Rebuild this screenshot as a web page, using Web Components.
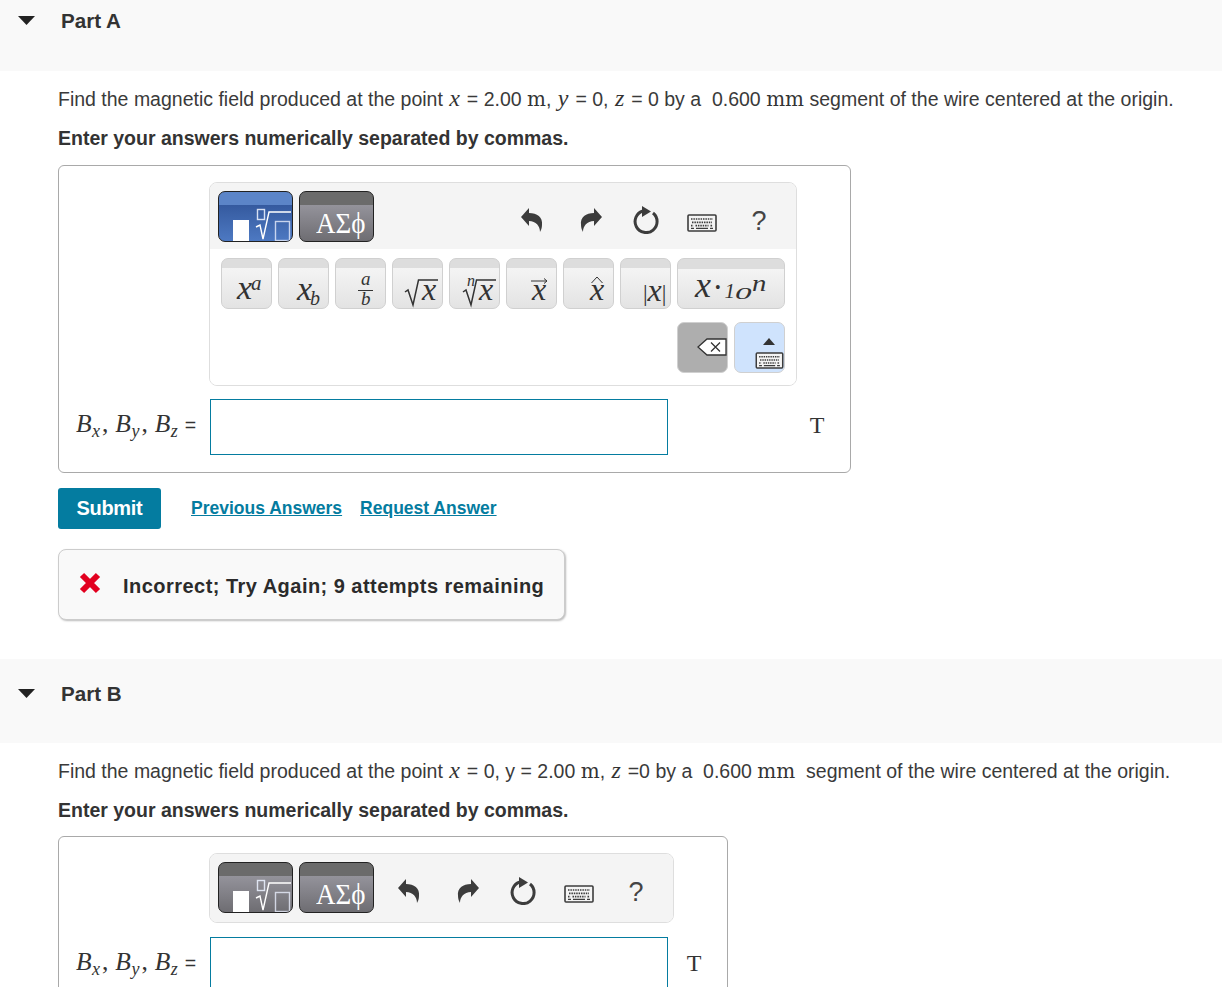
<!DOCTYPE html>
<html lang="en"><head><meta charset="utf-8"><title>Part A and Part B</title>
<style>
html,body{margin:0;padding:0;height:987px;overflow:hidden;background:#fff;font-family:"Liberation Sans",Arial,sans-serif;color:#333}
</style></head><body>
<x-part label="Part A" first>
  <x-prompt bold="Enter your answers numerically separated by commas.">Find the magnetic field produced at the point <x-m v>x</x-m> = 2.00 <x-m>m</x-m>, <x-m v>y</x-m> = 0, <x-m v>z</x-m> = 0 by a&nbsp; 0.600 <x-m>mm</x-m> segment of the wire centered at the origin.</x-prompt>
  <x-answer>
    <x-toolbar slot="toolbar" active spacer palette></x-toolbar>
  </x-answer>
  <x-actions></x-actions>
  <x-feedback>Incorrect; Try Again; 9 attempts remaining</x-feedback>
</x-part>
<x-part label="Part B">
  <x-prompt bold="Enter your answers numerically separated by commas.">Find the magnetic field produced at the point <x-m v>x</x-m> = 0, y = 2.00 <x-m>m</x-m>, <x-m v>z</x-m> =0 by a&nbsp; 0.600 <x-m>mm</x-m>&nbsp; segment of the wire centered at the origin.</x-prompt>
  <x-answer compact>
    <x-toolbar slot="toolbar"></x-toolbar>
  </x-answer>
</x-part>
<script>
const def=(n,css,html,init)=>customElements.define(n,class extends HTMLElement{
  constructor(){super();this.attachShadow({mode:'open'})}
  connectedCallback(){this.shadowRoot.innerHTML='<style>'+css+'</style>'+(typeof html==='function'?html(this):html);if(init)init(this)}
});
def('x-m',`:host{font-family:"DejaVu Serif",serif;font-size:20px;line-height:1;color:#333}
:host([v]){font-family:"Liberation Serif",serif;font-style:italic;font-size:24px;margin:0 1.500px 0 1px}`,'<slot></slot>');
def('x-part',`:host{display:block}
header{background:#f9f9f9;height:84px;box-sizing:border-box;padding:21px 0 0 18px;display:flex;gap:26px;align-items:flex-start}
:host([first]) header{height:71px;padding-top:7px}
svg{flex:none;margin-top:9px}
h2{margin:0;font:bold 20.600px/28px "Liberation Sans",Arial,sans-serif;color:#333}
main{display:block;padding:0 0 0 58px}
:host([first]) main{height:588px}`,
 e=>`<header><svg width="17" height="9" viewBox="0 0 17 9"><path d="M0 0H17L8.5 9Z" fill="#222"/></svg><h2>${e.getAttribute('label')}</h2></header><main><slot></slot></main>`);
def('x-prompt',`:host{display:block;font-size:19.500px;color:#3a3a3a;padding-top:14px}
p{margin:0;line-height:28px;height:28px;white-space:nowrap}
.b{font-weight:bold;margin-top:11px;color:#333}`,
 e=>`<p><slot></slot></p><p class="b">${e.getAttribute('bold')}</p>`);
def('x-answer',`:host{display:block;width:fit-content;margin-top:13px;border:1px solid #a9a9a9;border-radius:6px;box-sizing:border-box}
:host([compact]){margin-top:12px}
.g{display:grid;grid-template-columns:150px auto 53px;padding-top:16px;padding-bottom:17px;row-gap:13px;align-items:center}
:host([compact]) .g{row-gap:14px}
.tb{grid-column:2;grid-row:1}
.lab{grid-column:1;grid-row:2;padding:0 0 6px 17px;font:italic 25.500px/32px "Liberation Serif",serif;color:#333;white-space:nowrap}
.lab sub{font-size:18px;line-height:0;vertical-align:-5px;margin-left:.5px}
.lab span{font:normal 19.500px "Liberation Sans",sans-serif;margin-left:.5px}
.lab b{font-weight:normal;font-style:normal;margin-left:2px;margin-right:.5px}
.in{grid-column:2;grid-row:2;margin-left:1px;width:458px;height:56px;box-sizing:border-box;border:1px solid #047ca0;background:#fff}
.u{grid-column:3;grid-row:2;text-align:center;padding:0 13px 4px 0;font:24px "Liberation Serif",serif;color:#333}`,
 `<div class="g"><div class="tb"><slot name="toolbar"></slot></div>
 <div class="lab">B<sub>x</sub><b>,</b> B<sub>y</sub><b>,</b> B<sub>z</sub> <span>=</span></div>
 <div class="in" role="textbox"></div><div class="u">T</div></div>`);
const kb=(w,h)=>`<svg width="${w}" height="${h}" viewBox="0 0 30 18"><rect x="1" y="1" width="28" height="16" rx="1" fill="#f4f4f4" stroke="#3c3c3c" stroke-width="1.6"/><path d="M4 5H26M5 8.4H25M4 11.6H6.5M8.5 11.6H21.5M23.5 11.6H26" stroke="#3c3c3c" stroke-width="1.7" stroke-dasharray="1.5 .9" fill="none"/><path d="M4 14.4H7M9 14.4H21M23 14.4H26" stroke="#3c3c3c" stroke-width="1.4" fill="none"/></svg>`;
const UNDO='M1 10 9 1V6C17 6 23 10 22 18 22 21 21 23 20 25 20 19 16 14 9 14V19Z';
def('x-tab',`:host{display:block;width:75px;height:51px;box-sizing:border-box;border:1px solid #222;border-radius:7px;overflow:hidden;position:relative;
background:linear-gradient(#6b6b6b 0 13px,#94939b 13px,#6e6d72 100%);color:#fff;font:28px/1 "Liberation Serif","DejaVu Serif",serif}
:host([active]){background:linear-gradient(#5c85c8 0 13px,#355a9f 13px,#4d79c2 100%)}
.t{position:absolute;left:16px;bottom:0;white-space:nowrap;font-size:29px;line-height:35px;transform:scaleX(.93);transform-origin:0 100%}
svg{position:absolute;left:0;top:0}`,
 e=>e.hasAttribute('sym')?`<span class="t">ΑΣϕ</span>`:`<svg width="73" height="49" viewBox="0 0 73 49"><path d="M14 28H30V49H14Z" fill="#fff"/><rect x="38.5" y="17.5" width="7" height="10" fill="none" stroke="#e8eefc" stroke-width="1.4" opacity=".9"/><path d="M37 35 41 33 44 47 50 20H72" fill="none" stroke="#fff" stroke-width="1.4"/><rect x="56.5" y="29.5" width="14" height="19" fill="none" stroke="#e8eefc" stroke-width="1.4" opacity=".8"/></svg>`);
def('x-tool',`:host{display:flex;align-items:center;justify-content:center;height:51px;color:#3c3c3c;padding-top:3px;box-sizing:border-box}
span{font:27px/1 "Liberation Sans",sans-serif;margin-top:7px;color:#444}
svg{display:block}`,
 e=>{const n=e.getAttribute('name');
 if(n==='undo')return `<svg width="24" height="26" viewBox="0 0 24 26" style="margin-top:4px"><path d="${UNDO}" fill="#3c3c3c"/></svg>`;
 if(n==='redo')return `<svg width="24" height="26" viewBox="0 0 24 26" style="margin-top:4px"><path transform="matrix(-1 0 0 1 24 0)" d="${UNDO}" fill="#3c3c3c"/></svg>`;
 if(n==='reset')return `<svg width="28" height="28" viewBox="0 0 28 28" style="margin-top:4px"><path d="M11 5A11 11 0 1 0 21 7" fill="none" stroke="#3c3c3c" stroke-width="3"/><path d="M10 0 19 5.5 10 11Z" fill="#3c3c3c"/></svg>`;
 if(n==='kbd')return `<span style="margin:10px 0 0;display:block;line-height:0">${kb(30,18)}</span>`;
 return '<span>?</span>';});
def('x-mbtn',`:host{display:block;position:relative;width:51px;height:51px;box-sizing:border-box;border:1px solid #d0d0d0;border-radius:7px;overflow:hidden;
background:linear-gradient(#dddddd 0 9px,#f4f4f4 9px,#e3e3e3 100%);font:italic 34px/1 "Liberation Serif",serif;color:#333}
:host([wide]){width:108px;background:linear-gradient(#dddddd 0 10px,#f4f4f4 10px,#e3e3e3 100%)}
:host([kind=back]){background:#aeaeae}
:host([kind=kb]){background:#cfe3fd}
.a{position:absolute;white-space:nowrap;line-height:1}
svg{position:absolute;left:0;top:0}
.u{font-style:normal}`,
 e=>{const A=(l,t,s,x='')=>`<span class="a" style="left:${l}px;top:${t}px;${x}">${s}</span>`;
 const k=e.getAttribute('kind');
 const svg=b=>`<svg width="${e.hasAttribute('wide')?106:49}" height="49" viewBox="0 0 ${e.hasAttribute('wide')?106:49} 49" fill="none" stroke="#333">${b}</svg>`;
 switch(k){
 case 'sup':return A(15,12,'x')+A(29,14,'a','font-size:21px');
 case 'sub':return A(18,13,'x')+A(31,29,'b','font-size:20px');
 case 'frac':return A(25,10,'a','font-size:19px')+svg('<path d="M22 31.500H37" stroke-width="1"/>')+A(25,30,'b','font-size:19px');
 case 'sqrt':return svg('<path d="M12 33 15 31 20 46 25.500 21H45" stroke-width="1.500"/>')+A(29,14,'x','font-size:32px');
 case 'nrt':return A(17,14,'n','font-size:16px')+svg('<path d="M13 33 16 31 21 46 26.500 21H46" stroke-width="1.500"/>')+A(29,14,'x','font-size:32px');
 case 'vec':return svg('<path d="M24 22H40M37 19.500 40 22 37 24.500" stroke-width="1"/>')+A(25,14,'x','font-size:32px');
 case 'hat':return svg('<path d="M27.500 24 33 18 38.500 24" stroke-width="1"/>')+A(26,14,'x','font-size:32px');
 case 'abs':return A(22,15,'<span class="u" style="font-size:23px">|</span>x<span class="u" style="font-size:23px">|</span>','font-size:32px');
 case 'exp':return A(17,8,'x','font-size:36px')+A(37,21,'•','font-size:16px;font-style:normal')
   +A(46.500,22,'1','font-size:21px')
   +A(57,26,'0','font-size:17px;transform:scaleX(1.95);transform-origin:0 0')
   +A(74,13,'n','font-size:23px;transform:scaleX(1.25);transform-origin:0 0');
 case 'back':return `<svg width="49" height="49" viewBox="0 0 49 49" fill="none"><path d="M29 16H48V32H29L20 24Z" fill="#fff" stroke="#333" stroke-width="1.300"/><path d="M33 19.500 42 28.500M42 19.500 33 28.500" stroke="#333" stroke-width="1.300"/></svg>`;
 case 'kb':return `<svg width="49" height="49" viewBox="0 0 49 49"><path d="M28 22 34 15 40 22Z" fill="#333"/></svg><span class="a" style="left:20px;top:29px;line-height:0">${kb(29,17)}</span>`;
 }return '';});
def('x-toolbar',`:host{display:block;border:1px solid #dedede;border-radius:8px;overflow:hidden;background:#fff;width:465px;box-sizing:border-box}
:host([spacer]){width:588px}
.bar{background:#f4f4f4;height:68px;box-sizing:border-box;padding:8px 8px 0;display:flex;align-items:flex-start}
:host([spacer]) .bar{height:66px}
.tabs{display:flex;gap:6px}
.tools{margin-left:auto;display:grid;grid-template-columns:64px 54px 56px 56px 58px}
.pal{display:flex;flex-wrap:wrap;justify-content:flex-end;gap:13px 6px;padding:9px 11px 12px 11px;background:#fff}`,
 e=>`<div class="bar"><div class="tabs"><x-tab ${e.hasAttribute('active')?'active':''}></x-tab><x-tab sym></x-tab></div>
 <div class="tools"><x-tool name="undo"></x-tool><x-tool name="redo"></x-tool><x-tool name="reset"></x-tool><x-tool name="kbd"></x-tool><x-tool name="help"></x-tool></div></div>`+
 (e.hasAttribute('palette')?`<div class="pal">${['sup','sub','frac','sqrt','nrt','vec','hat','abs'].map(k=>`<x-mbtn kind="${k}"></x-mbtn>`).join('')}<x-mbtn kind="exp" wide></x-mbtn><x-mbtn kind="back"></x-mbtn><x-mbtn kind="kb"></x-mbtn></div>`:''));
def('x-actions',`:host{display:flex;margin-top:15px;align-items:center}
button{all:unset;background:#047ca0;color:#fff;width:103px;height:41px;text-align:center;border-radius:3px;font:bold 20px/41px "Liberation Sans",sans-serif;letter-spacing:-.3px;box-sizing:border-box}
a{color:#047ca0;font:bold 17.500px/22px "Liberation Sans",sans-serif;text-decoration:underline;margin-top:-2px}
a.p{margin-left:30px}a.r{margin-left:18px}`,
 `<button>Submit</button><a class="p" href="#">Previous Answers</a><a class="r" href="#">Request Answer</a>`);
def('x-feedback',`:host{display:flex;align-items:center;width:507px;height:71px;box-sizing:border-box;margin-top:20px;border:1px solid #ccc;border-radius:8px;background:#f9f9f9;box-shadow:1px 1px 2px #bbb;padding-left:20px;font:bold 20px "Liberation Sans",sans-serif;color:#2b2b2b}
svg{flex:none;margin-right:22px;margin-top:-4px}
span{white-space:nowrap;letter-spacing:.47px;margin-top:3px}`,
 `<svg width="22" height="22" viewBox="0 0 22 22"><path d="M3 3 19 19M19 3 3 19" stroke="#e2001f" stroke-width="6"/></svg><span><slot></slot></span>`);
</script>
</body></html>
